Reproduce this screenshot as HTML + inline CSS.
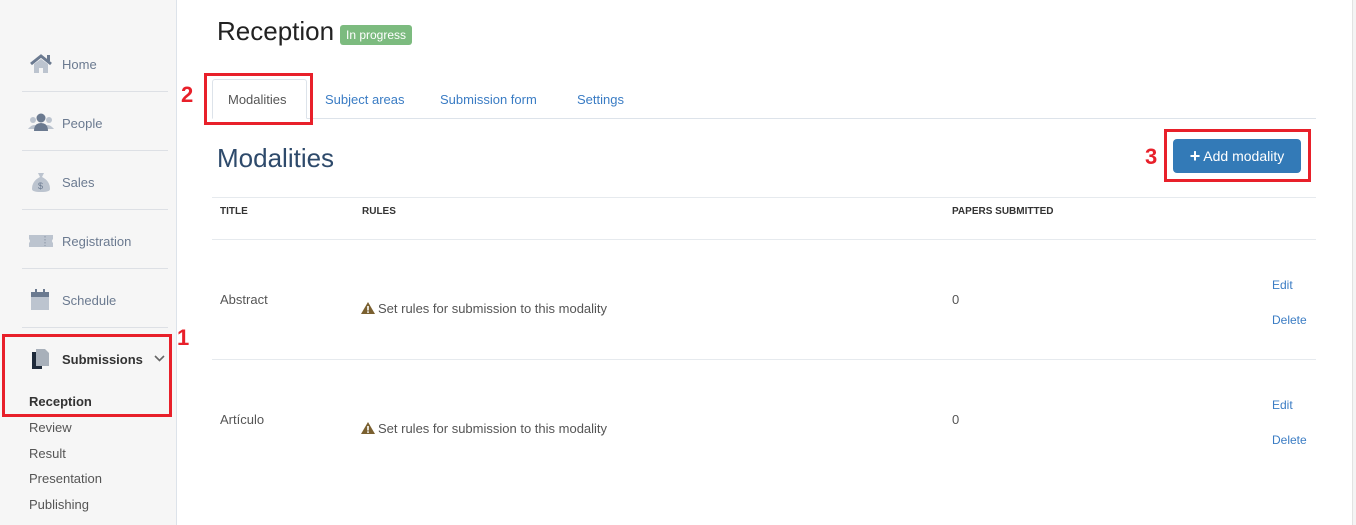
<!DOCTYPE html>
<html><head><meta charset="utf-8"><style>
*{box-sizing:border-box;margin:0;padding:0}
body{width:1356px;height:525px;overflow:hidden;background:#fff;font-family:"Liberation Sans",sans-serif;position:relative;color:#333}
.sb{position:absolute;left:0;top:0;width:177px;height:525px;background:#f6f6f6;border-right:1px solid #dde3ea}
.it{position:absolute;left:28px;height:24px;font-size:13px;color:#6b7a90;display:flex;align-items:center}
.it svg{width:26px;height:22px;margin-right:8px}
.sep{position:absolute;left:22px;width:146px;height:1px;background:#dde0e5}
.sub{position:absolute;left:29px;font-size:13px;color:#555}
.abs{position:absolute}
.red{position:absolute;border:3px solid #e8202a}
.num{position:absolute;color:#e8202a;font-weight:bold;font-size:22px}
.th{position:absolute;top:206px;font-size:10px;font-weight:bold;color:#333}
.hl{position:absolute;left:212px;width:1104px;height:1px;background:#e6eaee}
.td{position:absolute;font-size:13px;color:#555}
.td svg{vertical-align:-1px;margin-right:3px}
.lk{position:absolute;font-size:12px;color:#3a7cc4;left:1272px}
</style></head><body>
<div class="sb"></div>
<div class="it" style="top:52px"><svg viewBox="0 0 26 22"><path d="M3 11 L13 3 L23 11" fill="none" stroke="#6b7a90" stroke-width="3"/><rect x="19" y="2" width="3" height="6" fill="#6b7a90"/><path d="M6 11 L13 6 L20 11 V20 H15 V15 H11 V20 H6Z" fill="#bcc4cf"/></svg>Home</div>
<div class="sep" style="top:91px"></div>
<div class="it" style="top:111px"><svg viewBox="0 0 26 22"><circle cx="5" cy="8" r="3" fill="#bcc4cf"/><circle cx="21" cy="8" r="3" fill="#bcc4cf"/><path d="M0 17 Q5 11 9 14 V17Z M26 17 Q21 11 17 14 V17Z" fill="#bcc4cf"/><circle cx="13" cy="6" r="4.5" fill="#6b7a90"/><path d="M6 19 Q6 11 13 11 Q20 11 20 19Z" fill="#6b7a90"/></svg>People</div>
<div class="sep" style="top:150px"></div>
<div class="it" style="top:170px"><svg viewBox="0 0 26 22"><path d="M10 2 H16 L14 6 Q22 10 22 18 Q22 21 13 21 Q4 21 4 18 Q4 10 12 6Z" fill="#bcc4cf"/><text x="10" y="18" font-size="9" fill="#6b7a90" font-family="Liberation Sans">$</text></svg>Sales</div>
<div class="sep" style="top:209px"></div>
<div class="it" style="top:229px"><svg viewBox="0 0 26 22"><path d="M1 5 H25 V9 Q23 11 25 13 V17 H1 V13 Q3 11 1 9Z" fill="#bcc4cf"/><path d="M17 6 V16" stroke="#8a96a6" stroke-dasharray="1.5 1.5"/></svg>Registration</div>
<div class="sep" style="top:268px"></div>
<div class="it" style="top:288px"><svg viewBox="0 0 26 22"><rect x="3" y="3" width="18" height="18" fill="#bcc4cf"/><rect x="3" y="3" width="18" height="5" fill="#6b7a90"/><rect x="7" y="0" width="2" height="5" fill="#6b7a90"/><rect x="15" y="0" width="2" height="5" fill="#6b7a90"/></svg>Schedule</div>
<div class="sep" style="top:327px"></div>
<div class="it" style="top:347px;color:#333;font-weight:bold"><svg viewBox="0 0 26 22"><rect x="4" y="4" width="10" height="17" fill="#1e2a3a"/><path d="M8 1 H17 L21 5 V18 H8Z" fill="#a8b0ba"/></svg>Submissions</div>
<svg class="abs" style="left:154px;top:355px" width="11" height="8"><path d="M1 1 L5.5 5.5 L10 1" fill="none" stroke="#666" stroke-width="1.6"/></svg>
<div class="sub" style="top:394px;font-weight:bold;color:#333">Reception</div>
<div class="sub" style="top:420px">Review</div>
<div class="sub" style="top:446px">Result</div>
<div class="sub" style="top:471px">Presentation</div>
<div class="sub" style="top:497px">Publishing</div>
<div class="red" style="left:2px;top:334px;width:170px;height:83px"></div>
<div class="num" style="left:177px;top:325px">1</div>

<div class="abs" style="left:217px;top:16px;font-size:26px;color:#222">Reception</div>
<div class="abs" style="left:340px;top:25px;background:#7cbb7f;color:#fff;font-size:12px;padding:3px 6px;border-radius:3px">In progress</div>

<div class="abs" style="left:212px;top:118px;width:1104px;height:1px;background:#dde3ea"></div>
<div class="abs" style="left:212px;top:79px;width:95px;height:40px;border:1px solid #dde3ea;border-bottom:1px solid #fff;border-radius:3px 3px 0 0;background:#fff"></div>
<div class="abs" style="left:228px;top:92px;font-size:13px;color:#555">Modalities</div>
<div class="abs" style="left:325px;top:92px;font-size:13px;color:#3a7cc4">Subject areas</div>
<div class="abs" style="left:440px;top:92px;font-size:13px;color:#3a7cc4">Submission form</div>
<div class="abs" style="left:577px;top:92px;font-size:13px;color:#3a7cc4">Settings</div>
<div class="red" style="left:204px;top:73px;width:109px;height:52px"></div>
<div class="num" style="left:181px;top:82px">2</div>

<div class="abs" style="left:217px;top:143px;font-size:26px;color:#2e4a6b;font-weight:300">Modalities</div>
<div class="abs" style="left:1173px;top:139px;width:128px;height:34px;background:#337ab7;border-radius:4px;color:#fff;font-size:14px;display:flex;align-items:center;justify-content:center"><b style="font-size:18px;margin-right:3px">+</b>Add modality</div>
<div class="red" style="left:1164px;top:129px;width:147px;height:53px"></div>
<div class="num" style="left:1145px;top:144px">3</div>

<div class="hl" style="top:197px"></div>
<div class="th" style="left:220px">TITLE</div>
<div class="th" style="left:362px">RULES</div>
<div class="th" style="left:952px">PAPERS SUBMITTED</div>
<div class="hl" style="top:239px"></div>

<div class="td" style="left:220px;top:292px">Abstract</div>
<div class="td" style="left:361px;top:301px"><svg width="14" height="12" viewBox="0 0 14 12"><path d="M7 0 L14 12 H0Z" fill="#7a6030"/><rect x="6.2" y="4" width="1.6" height="4.5" fill="#fff"/><rect x="6.2" y="9.3" width="1.6" height="1.6" fill="#fff"/></svg>Set rules for submission to this modality</div>
<div class="td" style="left:952px;top:292px">0</div>
<div class="lk" style="top:278px">Edit</div>
<div class="lk" style="top:313px">Delete</div>
<div class="hl" style="top:359px"></div>
<div class="td" style="left:220px;top:412px">Artículo</div>
<div class="td" style="left:361px;top:421px"><svg width="14" height="12" viewBox="0 0 14 12"><path d="M7 0 L14 12 H0Z" fill="#7a6030"/><rect x="6.2" y="4" width="1.6" height="4.5" fill="#fff"/><rect x="6.2" y="9.3" width="1.6" height="1.6" fill="#fff"/></svg>Set rules for submission to this modality</div>
<div class="td" style="left:952px;top:412px">0</div>
<div class="lk" style="top:398px">Edit</div>
<div class="lk" style="top:433px">Delete</div>
<div class="abs" style="left:1352px;top:0;width:4px;height:525px;background:#f4f4f4;border-left:1px solid #e2e2e2"></div>
</body></html>
